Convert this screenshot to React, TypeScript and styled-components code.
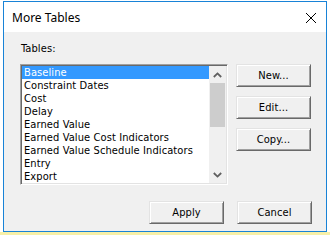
import React from "react";
import styled, { createGlobalStyle } from "styled-components";

const Global = createGlobalStyle`
  html, body { margin: 0; padding: 0; background: #ffffff; }
  body { width: 330px; height: 235px; overflow: hidden; }
`;

const Page = styled.div`
  width: 330px;
  height: 235px;
  padding: 1px 0 0 3px;
  box-sizing: border-box;
  background: linear-gradient(to bottom, #ffffff 0, #ffffff 232px, #f7f0a8 232px);
`;

const Win = styled.div`
  width: 324px;
  height: 231px;
  box-sizing: border-box;
  border: 1px solid #1883d7;
  background: #f0f0f0;
  display: flex;
  flex-direction: column;
`;

const TitleBar = styled.div`
  height: 30px;
  background: #ffffff;
  display: flex;
  align-items: center;
  justify-content: space-between;
  padding: 0 9px 0 8px;
  font-family: "Noto Sans", "Open Sans", sans-serif;
  font-size: 12px;
  color: #000;
`;

const Title = styled.span`
  padding-top: 1px;
`;

const Close = styled.span`
  display: flex;
  width: 12px;
  height: 12px;
  margin-top: 2px;
`;

const Body = styled.div`
  flex: 1;
  display: flex;
  flex-direction: column;
  padding: 10px 0 0 16px;
  font-family: "DejaVu Sans Condensed", "DejaVu Sans", sans-serif;
  font-stretch: condensed;
  font-size: 11px;
  letter-spacing: 0.1px;
  color: #000;
`;

const Label = styled.div`
  height: 13px;
  line-height: 13px;
  margin-left: 1px;
  margin-bottom: 9px;
`;

const Row = styled.div`
  display: flex;
  gap: 8px;
  align-items: flex-start;
`;

const ListBox = styled.div`
  width: 208px;
  height: 121px;
  box-sizing: border-box;
  border: 1px solid;
  border-color: #a0a0a0 #ffffff #ffffff #a0a0a0;
  box-shadow: inset 1px 1px #696969, inset -1px -1px #e3e3e3;
  padding: 1px;
  background: #ffffff;
  display: flex;
`;

const Items = styled.div`
  width: 187px;
  display: flex;
  flex-direction: column;
`;

const Item = styled.div<{ $selected?: boolean }>`
  height: 13px;
  line-height: 13px;
  padding-left: 2px;
  white-space: nowrap;
  overflow: hidden;
  background: ${(p) => (p.$selected ? "#3399ff" : "transparent")};
  color: ${(p) => (p.$selected ? "#ffffff" : "#000000")};
`;

const ScrollBar = styled.div`
  width: 17px;
  background: #f0f0f0;
  display: flex;
  flex-direction: column;
`;

const Arrow = styled.div`
  height: 17px;
  display: flex;
  align-items: center;
  justify-content: center;
`;

const Track = styled.div`
  flex: 1;
  display: flex;
  flex-direction: column;
`;

const Thumb = styled.div`
  height: 44px;
  margin: 0 1px;
  background: #cdcdcd;
`;

const ButtonCol = styled.div`
  display: flex;
  flex-direction: column;
  gap: 9px;
`;

const Button = styled.div`
  width: 75px;
  height: 23px;
  box-sizing: border-box;
  border: 1px solid;
  border-color: #e3e3e3 #696969 #696969 #e3e3e3;
  box-shadow: inset 1px 1px #ffffff, inset -1px -1px #a0a0a0;
  background: #f0f0f0;
  display: flex;
  align-items: center;
  justify-content: center;
  padding-bottom: 1px;
`;

const Footer = styled.div`
  display: flex;
  justify-content: flex-end;
  gap: 13px;
  margin-top: 16px;
  padding-right: 14px;
`;

const items = [
  "Baseline",
  "Constraint Dates",
  "Cost",
  "Delay",
  "Earned Value",
  "Earned Value Cost Indicators",
  "Earned Value Schedule Indicators",
  "Entry",
  "Export",
];

const Chevron = ({ up }: { up?: boolean }) => (
  <svg width="9" height="6" viewBox="0 0 9 6">
    <path
      d={up ? "M0.8 5 L4.5 1.4 L8.2 5" : "M0.8 1 L4.5 4.6 L8.2 1"}
      fill="none"
      stroke="#606060"
      strokeWidth="1.8"
    />
  </svg>
);

export default function App() {
  return (
    <>
      <Global />
      <Page>
        <Win>
          <TitleBar>
            <Title>More Tables</Title>
            <Close>
              <svg width="12" height="12" viewBox="0 0 12 12">
                <path d="M1 1 L11 11 M11 1 L1 11" stroke="#000" strokeWidth="1" fill="none" />
              </svg>
            </Close>
          </TitleBar>
          <Body>
            <Label>Tables:</Label>
            <Row>
              <ListBox>
                <Items>
                  {items.map((t, i) => (
                    <Item key={t} $selected={i === 0}>
                      {t}
                    </Item>
                  ))}
                </Items>
                <ScrollBar>
                  <Arrow>
                    <Chevron up />
                  </Arrow>
                  <Track>
                    <Thumb />
                  </Track>
                  <Arrow>
                    <Chevron />
                  </Arrow>
                </ScrollBar>
              </ListBox>
              <ButtonCol>
                <Button>New...</Button>
                <Button>Edit...</Button>
                <Button>Copy...</Button>
              </ButtonCol>
            </Row>
            <Footer>
              <Button>Apply</Button>
              <Button>Cancel</Button>
            </Footer>
          </Body>
        </Win>
      </Page>
    </>
  );
}
